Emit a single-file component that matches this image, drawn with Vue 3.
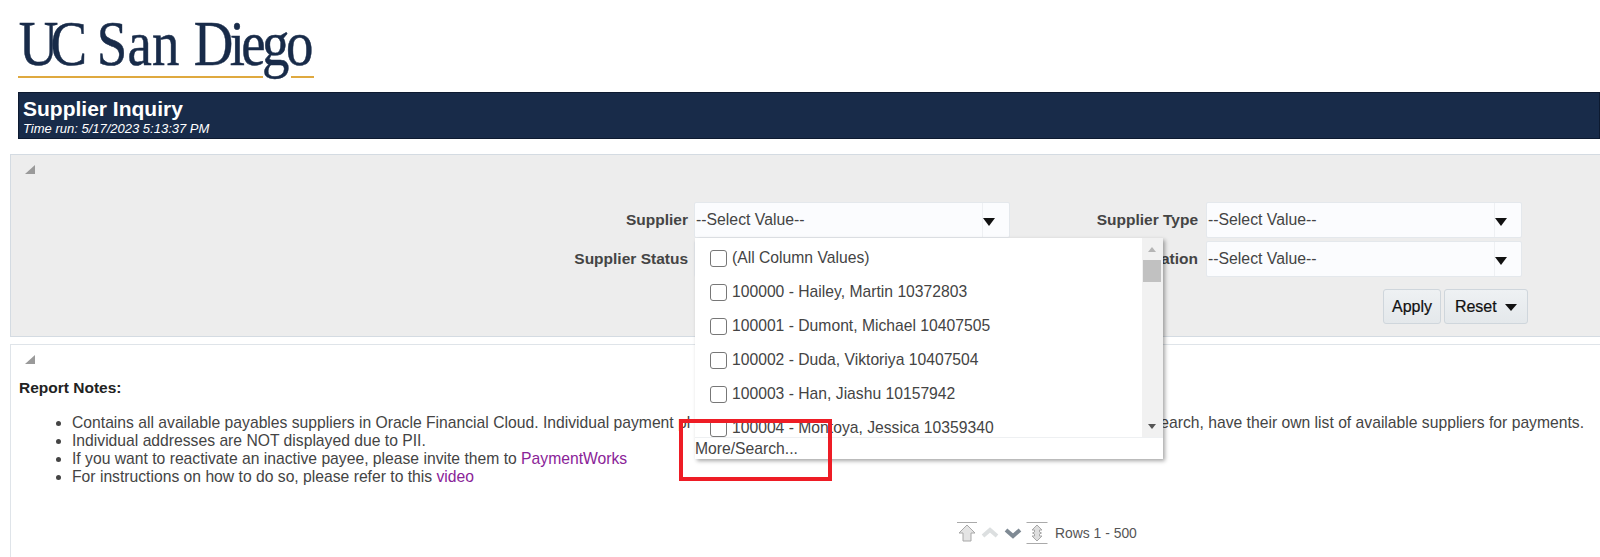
<script setup>
const rows = [
  '(All Column Values)',
  '100000 - Hailey, Martin 10372803',
  '100001 - Dumont, Michael 10407505',
  '100002 - Duda, Viktoriya 10407504',
  '100003 - Han, Jiashu 10157942',
  '100004 - Montoya, Jessica 10359340'
]
</script>

<template>
  <div class="page">
    <div class="logo">
      <div class="logo-text">
        <span class="w-uc">UC</span>
        <span class="w-san">San</span>
        <span class="w-diego">Diego</span>
      </div>
      <span class="rule rule-a"></span>
      <span class="rule rule-b"></span>
    </div>

    <header class="band">
      <div class="title">Supplier Inquiry</div>
      <div class="run">Time run: 5/17/2023 5:13:37 PM</div>
    </header>

    <section class="filters">
      <i class="collapse"></i>
      <div class="form">
        <div class="col col-left">
          <div class="field">
            <label>Supplier</label>
            <div class="select"><span class="value">--Select Value--</span><span class="btn"><i class="caret"></i></span></div>
          </div>
          <div class="field">
            <label>Supplier Status</label>
            <div class="select"><span class="value"></span><span class="btn"><i class="caret"></i></span></div>
          </div>
        </div>
        <div class="col col-right">
          <div class="field">
            <label>Supplier Type</label>
            <div class="select"><span class="value">--Select Value--</span><span class="btn"><i class="caret"></i></span></div>
          </div>
          <div class="field">
            <label>Supplier Classification</label>
            <div class="select"><span class="value">--Select Value--</span><span class="btn"><i class="caret"></i></span></div>
          </div>
        </div>
      </div>
      <div class="actions">
        <button class="action apply">Apply</button>
        <button class="action reset">Reset <i class="caret small"></i></button>
      </div>
    </section>

    <section class="notes">
      <i class="collapse"></i>
      <div class="notes-title">Report Notes:</div>
      <ul>
        <li>Contains all available payables suppliers in Oracle Financial Cloud. Individual payment pl<span class="hidden-run"></span>earch, have their own list of available suppliers for payments.</li>
        <li>Individual addresses are NOT displayed due to PII.</li>
        <li>If you want to reactivate an inactive payee, please invite them to <a>PaymentWorks</a></li>
        <li>For instructions on how to do so, please refer to this <a>video</a></li>
      </ul>
      <div class="pager">
        <svg width="20" height="22" viewBox="0 0 20 22"><path d="M0 .5h20" stroke="#aaa" fill="none"/><path d="M10 3l8 8h-4v8H6v-8H2z" fill="#e4e4e4" stroke="#a8a8a8"/></svg>
        <svg class="chev" width="20" height="22" viewBox="0 0 20 22"><path d="M3 14l7-6 7 6" fill="none" stroke="#dcdfe0" stroke-width="4"/></svg>
        <svg class="chev" width="20" height="22" viewBox="0 0 20 22"><path d="M3 8l7 6 7-6" fill="none" stroke="#7f8a94" stroke-width="4"/></svg>
        <svg width="22" height="22" viewBox="0 0 21 22"><path d="M0 .5h21M0 21.500h21" stroke="#aaa" fill="none"/><path d="M10.500 3l5 5h-2.500v2l2 1-2 1v2h2.500l-5 5-5-5H8v-2l-2-1 2-1V8H5.500z" fill="#dedede" stroke="#a8a8a8"/></svg>
        <span class="rows-label">Rows 1 - 500</span>
      </div>
    </section>

    <div class="dropdown">
      <div class="list">
        <div class="items">
          <div v-for="r in rows" :key="r" class="item"><span class="box"></span><span>{{ r }}</span></div>
        </div>
        <div class="scroll">
          <i class="arrow up"></i>
          <i class="thumb"></i>
          <i class="arrow down"></i>
        </div>
      </div>
      <div class="more">More/Search...</div>
    </div>
    <div class="highlight"></div>
  </div>
</template>

<style>
html, body { margin: 0; overflow: hidden; background: #fff; }
</style>

<style scoped>
.page {
  position: relative;
  width: 1600px;
  height: 557px;
  overflow: hidden;
  background: #fff;
  font-family: "Liberation Sans", Arial, sans-serif;
  color: #333;
}
.logo {
  position: relative;
  height: 92px;
  margin-left: 18px;
}
.logo-text {
  display: flex;
  padding: 9px 0 0 1px;
  font-family: "Liberation Serif", "Times New Roman", serif;
  font-size: 63px;
  line-height: 70px;
  color: #182b49;
  -webkit-text-stroke: 0.5px #182b49;
  white-space: nowrap;
  transform: scaleX(0.87);
  transform-origin: left top;
}
.w-uc { letter-spacing: -9px; }
.w-san { margin-left: 20px; letter-spacing: 0.300px; }
.w-diego { margin-left: 16px; letter-spacing: -4.100px; }
.rule { position: absolute; top: 76px; height: 2px; background: #dfa93f; }
.rule-a { left: 0; width: 245px; }
.rule-b { left: 273px; width: 23px; }

.band {
  height: 47px;
  margin-left: 18px;
  box-sizing: border-box;
  padding: 4px 0 0 4px;
  background: #182b49;
  border: 1px solid #0d1a30;
  color: #fff;
}
.title { font-size: 21px; font-weight: 700; line-height: 24px; }
.run { font-size: 13px; font-style: italic; line-height: 15px; }

.filters {
  position: relative;
  height: 183px;
  box-sizing: border-box;
  margin: 15px 0 0 10px;
  background: #ededed;
  border: 1px solid #d4dbe2;
  border-right: 0;
}
.collapse {
  display: block;
  width: 0;
  height: 0;
  margin: 10px 0 0 14px;
  border-style: solid;
  border-width: 0 0 9px 10px;
  border-color: transparent transparent #9a9a9a transparent;
}
.form { display: flex; margin-top: 28px; }
.col { display: flex; flex-direction: column; gap: 3px; }
.col-left { width: 999px; }
.col-right { width: 512px; }
.field { display: flex; justify-content: flex-end; align-items: center; gap: 6px; height: 36px; }
.col-right .field { gap: 8px; }
label { font-size: 15.500px; font-weight: 700; color: #444; white-space: nowrap; }
.select {
  display: flex;
  width: 316px;
  height: 36px;
  box-sizing: border-box;
  background: #fbfcfe;
  border: 1px solid #e4e8ec;
  border-radius: 2px;
}
.value { flex: 1; font-size: 15.800px; line-height: 34px; padding-left: 1px; color: #444; }
.btn { width: 26px; display: flex; align-items: center; border-left: 1px solid #eef0f3; }
.caret {
  display: block;
  width: 0;
  height: 0;
  margin-top: 3px;
  border-style: solid;
  border-width: 8px 6.500px 0;
  border-color: #111 transparent transparent;
}
.caret.small { display: inline-block; margin: 0 0 1px 4px; border-width: 7px 6px 0; }
.actions {
  position: absolute;
  top: 134px;
  left: 1372px;
  display: flex;
  gap: 3px;
}
.action {
  height: 35px;
  box-sizing: border-box;
  padding: 0;
  font-family: inherit;
  font-size: 16px;
  font-weight: 400;
  -webkit-text-stroke: 0.2px #111;
  color: #111;
  background: linear-gradient(#eef1f3, #e4e8eb);
  border: 1px solid #cfd6dc;
  border-radius: 3px;
}
.apply { width: 58px; }
.reset { width: 84px; }

.notes {
  height: 213px;
  box-sizing: border-box;
  margin: 7px 0 0 10px;
  position: relative;
  border: 1px solid #dfe4e9;
  border-right: 0;
  border-bottom: 0;
}
.notes-title { margin: 15px 0 0 8px; font-size: 15.500px; font-weight: 700; line-height: 18px; color: #222; }
ul {
  margin: 17px 0 0;
  padding: 0 0 0 61px;
  font-size: 15.700px;
  line-height: 18.100px;
  color: #444;
}
li { white-space: nowrap; }
.hidden-run { display: inline-block; width: 470px; }
a { color: #8a2398; }
.pager {
  position: absolute;
  top: 177px;
  left: 946px;
  display: flex;
  align-items: center;
  gap: 3px;
}
.rows-label { margin-left: 4px; font-size: 13.900px; color: #555; }

.dropdown {
  position: absolute;
  left: 695px;
  top: 238px;
  width: 468px;
  height: 221px;
  display: flex;
  flex-direction: column;
  background: #fff;
  box-shadow: 2px 2px 4px rgba(0, 0, 0, .35);
}
.list { display: flex; height: 199px; border-bottom: 1px solid #eef0f2; overflow: hidden; }
.items { flex: 1; padding-top: 3px; overflow: hidden; }
.item {
  display: flex;
  align-items: center;
  gap: 5px;
  height: 34px;
  padding-left: 15px;
  font-size: 15.700px;
  color: #444;
  white-space: nowrap;
}
.box {
  width: 15px;
  height: 15px;
  border: 1px solid #777;
  border-radius: 3px;
  background: #fff;
}
.scroll { position: relative; width: 21px; background: #f1f1f1; }
.thumb { position: absolute; left: 1px; top: 22px; width: 18px; height: 22px; background: #c1c1c1; }
.arrow { position: absolute; left: 6px; width: 0; height: 0; border-style: solid; border-color: transparent; }
.arrow.up { top: 9px; border-width: 0 4.500px 5px; border-bottom-color: #b5b5b5; }
.arrow.down { bottom: 8px; border-width: 5px 4.500px 0; border-top-color: #555; }
.more { font-size: 15.700px; line-height: 21px; color: #444; }
.highlight {
  position: absolute;
  left: 679px;
  top: 419px;
  width: 153px;
  height: 62px;
  box-sizing: border-box;
  border: 4px solid #ee1c25;
}
</style>
